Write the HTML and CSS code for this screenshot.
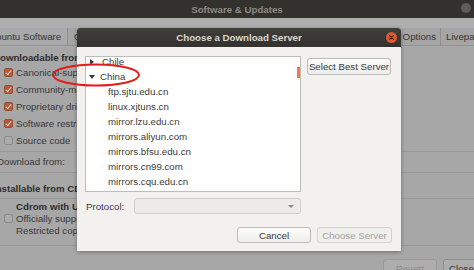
FILE: index.html
```html
<!DOCTYPE html>
<html lang="en">
<head>
<meta charset="utf-8">
<title>Software &amp; Updates</title>
<link rel="stylesheet" href="styles.css">
</head>
<body>
<div class="screen">
  <div class="app">
    <header class="app-title">
      <span class="app-title-text">Software &amp; Updates</span>
      <span class="win-close"></span>
    </header>
    <div class="app-strip"></div>
    <nav class="tabs">
      <div class="tab t1">Ubuntu Software</div>
      <div class="tab t2">Other Software</div>
      <div class="tab t3">Updates</div>
      <div class="tab t4">Authentication</div>
      <div class="tab t5">Additional Drivers</div>
      <div class="tab t6">Developer Options</div>
      <div class="tab t7">Livepatch</div>
    </nav>
    <section class="pane">
      <h2 class="heading">Downloadable from the Internet</h2>
      <div class="checks">
        <div class="check"><span class="box on"></span>Canonical-supported free and open-source software (main)</div>
        <div class="check"><span class="box on"></span>Community-maintained free and open-source software (universe)</div>
        <div class="check"><span class="box on"></span>Proprietary drivers for devices (restricted)</div>
        <div class="check"><span class="box on"></span>Software restricted by copyright or legal issues (multiverse)</div>
        <div class="check"><span class="box"></span>Source code</div>
      </div>
      <div class="sep"></div>
      <div class="dl-row">Download from:</div>
      <div class="sep"></div>
      <h2 class="heading heading-cd">Installable from CD-ROM/DVD</h2>
      <div class="cd-frame">
        <div class="cd-item">
          <span class="box"></span>
          <div class="cd-text">
            <b>Cdrom with Ubuntu 20.04 'Focal Fossa'</b>
            <span>Officially supported</span>
            <span>Restricted copyright</span>
          </div>
        </div>
      </div>
    </section>
    <footer class="app-buttons">
      <div class="app-btn btn-revert disabled">Revert</div>
      <div class="app-btn btn-close">Close</div>
    </footer>
  </div>

  <div class="dialog">
    <div class="dlg-title">
      <span>Choose a Download Server</span>
      <span class="dlg-close"><svg width="11" height="11" viewBox="0 0 11 11"><circle cx="5.5" cy="5.5" r="5.5" fill="#e4572c"/><path d="M3.6 3.6 L7.4 7.4 M7.4 3.6 L3.6 7.4" stroke="#4a2416" stroke-width="1.3" stroke-linecap="round"/></svg></span>
    </div>
    <div class="dlg-body">
      <div class="dlg-main">
        <div class="tree">
          <div class="tree-rows">
            <div class="row country"><span class="tri-right"></span>Chile</div>
            <div class="row country"><span class="tri-down"></span>China</div>
            <div class="row mirror">ftp.sjtu.edu.cn</div>
            <div class="row mirror">linux.xjtuns.cn</div>
            <div class="row mirror">mirror.lzu.edu.cn</div>
            <div class="row mirror">mirrors.aliyun.com</div>
            <div class="row mirror">mirrors.bfsu.edu.cn</div>
            <div class="row mirror">mirrors.cn99.com</div>
            <div class="row mirror">mirrors.cqu.edu.cn</div>
            <div class="row mirror">mirrors.dgut.edu.cn</div>
          </div>
          <span class="scroll-ind"></span>
        </div>
        <div class="side">
          <div class="btn btn-best">Select Best Server</div>
        </div>
      </div>
      <div class="proto-row">
        <span class="proto-label">Protocol:</span>
        <div class="combo"><span class="combo-arrow"></span></div>
      </div>
      <div class="dlg-buttons">
        <div class="btn btn-cancel">Cancel</div>
        <div class="btn btn-choose disabled">Choose Server</div>
      </div>
    </div>
  </div>

  <svg class="annot" width="474" height="270" viewBox="0 0 474 270">
    <ellipse cx="96" cy="75" rx="43" ry="10.5" fill="none" stroke="#e01e1a" stroke-width="2"/>
  </svg>
</div>
</body>
</html>
```

FILE: styles.css
```css
* { box-sizing: border-box; }

body {
  margin: 0;
  width: 474px;
  height: 270px;
  overflow: hidden;
  background: #a7a7a7;
  font-family: "Liberation Sans", Arial, sans-serif;
  font-size: 9.7px;
}

.screen {
  position: relative;
  width: 474px;
  height: 270px;
  overflow: hidden;
}

/* ---------- background application window (dimmed) ---------- */
.app {
  margin-left: -17px;
  width: 560px;
  color: #383838;
}

.app-title {
  height: 18px;
  background: #32312d;
  display: flex;
  align-items: center;
  padding-left: 17px;
  width: 491px;
  position: relative;
}

.app-title-text {
  width: 474px;
  text-align: center;
  color: #8d8b85;
  font-weight: bold;
}

.win-close {
  position: absolute;
  right: 3px;
  top: 3px;
  width: 10px;
  height: 10px;
  border-radius: 50%;
  background: #5d5c58;
}

.app-strip {
  height: 10px;
  background: #afafaf;
}

.tabs {
  display: flex;
  height: 18px;
  border-bottom: 1px solid #939393;
  background: #a5a5a5;
}

.tab {
  flex: none;
  display: flex;
  align-items: center;
  padding: 0 6px;
  border-right: 1px solid #8f8f8f;
  white-space: nowrap;
  overflow: hidden;
  color: #343434;
}

.t1 { width: 85px; background: #a9a9a9; }
.t2 { width: 78px; }
.t3 { width: 50px; }
.t4 { width: 70px; }
.t5 { width: 78px; }
.t6 { width: 97px; justify-content: flex-end; padding-right: 4px; }
.t7 { width: 80px; padding-left: 5px; border-right: none; }

.pane {
  padding-top: 5px;
}

.heading {
  margin: 0;
  padding-left: 10px;
  height: 13px;
  line-height: 13px;
  font-size: 9.7px;
  font-weight: bold;
  color: #2e2e2e;
  white-space: nowrap;
}

.checks {
  padding-left: 21px;
}

.check {
  height: 17px;
  display: flex;
  align-items: center;
  gap: 3px;
  white-space: nowrap;
}

.box {
  flex: none;
  width: 9px;
  height: 9px;
  border-radius: 2px;
  border: 1px solid #8b8b8b;
  background: #ababab;
  position: relative;
}

.box.on {
  background: #b65a3a;
  border-color: #a04c30;
}

.box.on::after {
  content: "";
  position: absolute;
  left: 2px;
  top: 0px;
  width: 2px;
  height: 5px;
  border-right: 1.3px solid #d9d4cf;
  border-bottom: 1.3px solid #d9d4cf;
  transform: rotate(40deg);
}

.sep {
  height: 1px;
  background: #999999;
  margin-top: 2px;
}

.dl-row {
  height: 20px;
  line-height: 20px;
  padding-left: 14px;
  white-space: nowrap;
}

.dl-row + .sep { margin-top: 0; }

.heading-cd {
  padding-top: 8px;
  height: 24px;
  line-height: 16px;
  margin-bottom: 1px;
}

.cd-frame {
  border-top: 1px solid #9a9a9a;
  border-bottom: 1px solid #9a9a9a;
  padding: 2px 0 8px 21px;
}

.cd-item {
  display: flex;
  align-items: center;
  gap: 3px;
}

.cd-item .box { margin-top: -2px; }

.cd-text {
  display: flex;
  flex-direction: column;
  white-space: nowrap;
}

.cd-text b, .cd-text span {
  height: 12px;
  line-height: 12px;
}

.cd-text b { color: #2e2e2e; }

.app-buttons {
  display: flex;
  gap: 6px;
  padding-top: 13px;
  padding-left: 400px;
}

.app-btn {
  flex: none;
  height: 20px;
  border: 1px solid #8f8f8f;
  border-radius: 3px;
  background: #adadad;
  line-height: 18px;
  color: #333333;
  white-space: nowrap;
}

.btn-revert {
  width: 54px;
  text-align: center;
}

.btn-close {
  padding: 0 12px 0 5px;
}

.app-btn.disabled { color: #8a8a8a; border-color: #9a9a9a; }

/* ---------- modal dialog ---------- */
.dialog {
  position: absolute;
  left: 77px;
  top: 28px;
  width: 324px;
  height: 223px;
  background: #f2f1f0;
  box-shadow: 0 1px 4px rgba(0, 0, 0, 0.35);
  border-radius: 3px 3px 0 0;
  display: flex;
  flex-direction: column;
  color: #3c3c3c;
}

.dlg-title {
  height: 19px;
  flex: none;
  background: linear-gradient(#3f3e3a, #33322e);
  border-radius: 3px 3px 0 0;
  display: flex;
  align-items: center;
  justify-content: center;
  position: relative;
  color: #dcd8cf;
  font-weight: bold;
}

.dlg-close {
  position: absolute;
  right: 4px;
  top: 4px;
  width: 11px;
  height: 11px;
  display: flex;
}

.dlg-body {
  flex: 1;
  padding: 9px 9px 8px 8px;
  display: flex;
  flex-direction: column;
}

.dlg-main {
  display: flex;
  height: 136px;
}

.tree {
  position: relative;
  width: 216px;
  height: 136px;
  background: #ffffff;
  border: 1px solid #bdbdb9;
  overflow: hidden;
}

.tree-rows {
  margin-top: -3px;
}

.row {
  height: 15px;
  display: flex;
  align-items: center;
  white-space: nowrap;
}

.country { padding-left: 3px; }

.mirror { padding-left: 22px; }

.tri-right {
  width: 0;
  height: 0;
  border-top: 3.5px solid transparent;
  border-bottom: 3.5px solid transparent;
  border-left: 4px solid #3a3a3a;
  margin-left: 1px;
  margin-right: 8px;
}

.tri-down {
  width: 0;
  height: 0;
  border-left: 3.5px solid transparent;
  border-right: 3.5px solid transparent;
  border-top: 4px solid #3a3a3a;
  margin-right: 5px;
}

.scroll-ind {
  position: absolute;
  right: 0;
  top: 10px;
  width: 3px;
  height: 11px;
  background: #ef7c50;
}

.side {
  margin-left: 6px;
  padding-top: 2px;
}

.btn {
  height: 16px;
  border: 1px solid #bcbcb7;
  border-radius: 3px;
  background: linear-gradient(#fcfcfb, #eeeeec);
  display: flex;
  align-items: center;
  justify-content: center;
  white-space: nowrap;
  color: #3c3c3c;
}

.btn-best {
  width: 84px;
  height: 17px;
}

.proto-row {
  margin-top: 6px;
  height: 16px;
  display: flex;
  align-items: center;
}

.proto-label {
  width: 49px;
  padding-left: 1px;
}

.combo {
  width: 167px;
  height: 16px;
  border: 1px solid #cfcfcb;
  border-radius: 3px;
  background: #ecebea;
  position: relative;
}

.combo-arrow {
  position: absolute;
  right: 6px;
  top: 6px;
  width: 0;
  height: 0;
  border-left: 3px solid transparent;
  border-right: 3px solid transparent;
  border-top: 3px solid #8a8a88;
}

.dlg-buttons {
  margin-top: 13px;
  display: flex;
  justify-content: flex-end;
  gap: 6px;
}

.btn-cancel { width: 74px; }

.btn-choose { width: 75px; }

.btn.disabled {
  color: #a3a39f;
  background: #efefed;
  border-color: #d3d3cf;
}

.annot {
  position: absolute;
  left: 0;
  top: 0;
  pointer-events: none;
}
```
